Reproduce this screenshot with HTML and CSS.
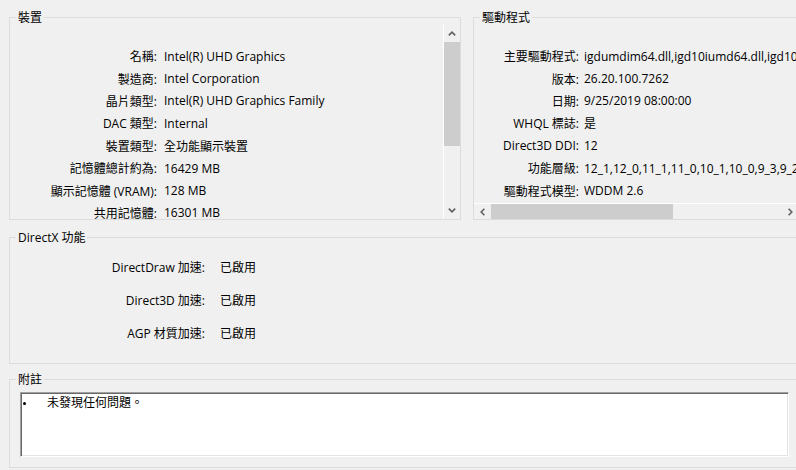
FILE: index.html
```html
<!DOCTYPE html>
<html lang="zh-Hant">
<head>
  <meta charset="UTF-8">
  <title>DirectX 診斷工具 - 顯示</title>
  <link rel="stylesheet" href="styles.css">
</head>
<body>
  <div class="dxdiag">
    <div class="top-row">
      <!-- 裝置 -->
      <fieldset class="group group-device">
        <legend>裝置</legend>
        <div class="device-pane">
          <dl class="props props-device">
            <dt>名稱:</dt><dd>Intel(R) UHD Graphics</dd>
            <dt>製造商:</dt><dd>Intel Corporation</dd>
            <dt>晶片類型:</dt><dd>Intel(R) UHD Graphics Family</dd>
            <dt>DAC 類型:</dt><dd>Internal</dd>
            <dt>裝置類型:</dt><dd>全功能顯示裝置</dd>
            <dt>記憶體總計約為:</dt><dd>16429 MB</dd>
            <dt>顯示記憶體 (VRAM):</dt><dd>128 MB</dd>
            <dt>共用記憶體:</dt><dd>16301 MB</dd>
          </dl>
          <div class="vscroll">
            <div class="sb-btn">
              <svg width="8" height="5" viewBox="0 0 8 5"><polyline points="0.8,4.4 4,1.2 7.2,4.4" fill="none" stroke="#606060" stroke-width="1.6"/></svg>
            </div>
            <div class="track"><div class="thumb"></div></div>
            <div class="sb-btn">
              <svg width="8" height="5" viewBox="0 0 8 5"><polyline points="0.8,0.6 4,3.8 7.2,0.6" fill="none" stroke="#606060" stroke-width="1.6"/></svg>
            </div>
          </div>
        </div>
      </fieldset>

      <!-- 驅動程式 -->
      <fieldset class="group group-driver">
        <legend>驅動程式</legend>
        <div class="driver-pane">
          <dl class="props props-driver">
            <dt>主要驅動程式:</dt><dd>igdumdim64.dll,igd10iumd64.dll,igd10iumd64.dll,igd12umd64.dll</dd>
            <dt>版本:</dt><dd>26.20.100.7262</dd>
            <dt>日期:</dt><dd>9/25/2019 08:00:00</dd>
            <dt>WHQL 標誌:</dt><dd>是</dd>
            <dt>Direct3D DDI:</dt><dd>12</dd>
            <dt>功能層級:</dt><dd>12_1,12_0,11_1,11_0,10_1,10_0,9_3,9_2,9_1</dd>
            <dt>驅動程式模型:</dt><dd>WDDM 2.6</dd>
          </dl>
          <div class="hscroll">
            <div class="sb-btn">
              <svg width="5" height="8" viewBox="0 0 5 8"><polyline points="4.4,0.8 1.2,4 4.4,7.2" fill="none" stroke="#606060" stroke-width="1.6"/></svg>
            </div>
            <div class="track"><div class="thumb"></div></div>
            <div class="sb-btn">
              <svg width="5" height="8" viewBox="0 0 5 8"><polyline points="0.6,0.8 3.8,4 0.6,7.2" fill="none" stroke="#606060" stroke-width="1.6"/></svg>
            </div>
          </div>
        </div>
      </fieldset>
    </div>

    <!-- DirectX 功能 -->
    <fieldset class="group group-wide group-features">
      <legend>DirectX 功能</legend>
      <dl class="props props-features">
        <dt>DirectDraw 加速:</dt><dd>已啟用</dd>
        <dt>Direct3D 加速:</dt><dd>已啟用</dd>
        <dt>AGP 材質加速:</dt><dd>已啟用</dd>
      </dl>
    </fieldset>

    <!-- 附註 -->
    <fieldset class="group group-wide group-notes">
      <legend>附註</legend>
      <div class="notes-body">
        <div class="notes-box">
          <ul class="notes-list">
            <li>未發現任何問題。</li>
          </ul>
        </div>
      </div>
    </fieldset>
  </div>
</body>
</html>
```

FILE: styles.css
```css
* {
  margin: 0;
  padding: 0;
  box-sizing: border-box;
}
html, body {
  background: #f0f0f0;
}
body {
  font-family: "Open Sans", "Noto Sans CJK TC", sans-serif;
  font-size: 12px;
  color: #000;
  width: 796px;
  height: 470px;
  overflow: hidden;
}
.dxdiag {
  padding: 10px 0 0 9px;
  width: 810px;
}

/* group boxes */
.group {
  border: 1px solid #dcdcdc;
  min-width: 0;
}
.group legend {
  margin-left: 6px;
  padding: 0 2px;
  line-height: 15px;
  white-space: nowrap;
}
.top-row {
  display: flex;
  gap: 12px;
}
.group-device {
  width: 452px;
  flex: none;
}
.group-driver {
  width: 327px;
  flex: none;
}
.group-wide {
  width: 791px;
}
.group-features {
  margin-top: 10px;
}
.group-notes {
  margin-top: 8px;
}

/* label / value lists */
.props {
  display: grid;
  align-content: start;
  align-items: center;
  grid-auto-rows: 22.4px;
  white-space: nowrap;
}
.props dt {
  text-align: right;
}
.props dd {
  overflow: hidden;
}
.device-pane {
  display: flex;
  height: 194px;
}
.props-device {
  flex: 1;
  padding-top: 20px;
  grid-template-columns: 147px auto;
  column-gap: 7px;
}
.driver-pane {
  display: flex;
  flex-direction: column;
  height: 194px;
}
.props-driver {
  flex: 1;
  padding-top: 20px;
  grid-template-columns: 105px auto;
  column-gap: 5px;
  overflow: hidden;
}
.props-features {
  height: 118px;
  padding-top: 5px;
  grid-auto-rows: 33px;
  grid-template-columns: 195px auto;
  column-gap: 15px;
}

/* scrollbars */
.sb-btn {
  display: flex;
  align-items: center;
  justify-content: center;
  flex: none;
}
.sb-btn svg {
  display: block;
}
.vscroll {
  width: 17px;
  flex: none;
  border-left: 1px solid #fff;
  display: flex;
  flex-direction: column;
}
.vscroll .sb-btn {
  height: 17px;
}
.vscroll .track {
  flex: 1;
}
.vscroll .thumb {
  height: 104px;
  background: #cdcdcd;
}
.hscroll {
  height: 16px;
  flex: none;
  border-top: 1px solid #fff;
  display: flex;
}
.hscroll .sb-btn {
  width: 17px;
}
.hscroll .track {
  flex: 1;
}
.hscroll .thumb {
  width: 182px;
  height: 100%;
  background: #cdcdcd;
}

/* notes */
.notes-body {
  padding: 5px 10px 10px;
}
.notes-box {
  height: 65px;
  background: #fff;
  border: 1px solid;
  border-color: #a0a0a0 #fff #fff #a0a0a0;
  box-shadow: inset 1px 1px #696969, inset -1px -1px #e3e3e3;
  padding: 2px 0 0 2px;
}
.notes-list {
  list-style: none;
  line-height: 16px;
}
.notes-list li::before {
  content: "";
  display: inline-block;
  width: 3px;
  height: 3px;
  border-radius: 50%;
  background: #000;
  margin-right: 21px;
  vertical-align: middle;
}
```
